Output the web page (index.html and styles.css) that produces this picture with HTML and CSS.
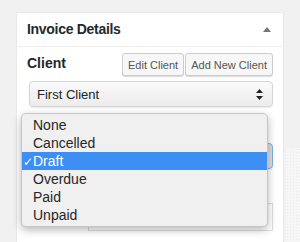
FILE: index.html
```html
<!DOCTYPE html>
<html>
<head>
    <meta charset="utf-8">
    <link rel="stylesheet" href="styles.css">
</head>
<body>
<div class="page">
    <div class="postbox">
        <div class="postbox-header">
            <h2>Invoice Details</h2>
            <span class="toggle"></span>
        </div>

        <div class="inside">
            <div class="client-row">
                <h3>Client</h3>
                <div class="buttons">
                    <button class="btn">Edit Client</button>
                    <button class="btn">Add New Client</button>
                </div>
            </div>

            <div class="select client-select">
                <span>First Client</span>
                <svg class="arrows" width="7" height="11" viewBox="0 0 7 11">
                    <path d="M3.5 0 L7 4 L0 4 Z M0 7 L7 7 L3.5 11 Z" fill="#222"/>
                </svg>
            </div>

            <div class="field status-field">
                <div class="select status-select"></div>
            </div>

            <div class="field">
                <div class="input"></div>
            </div>
        </div>

        <ul class="menu">
            <li>None</li>
            <li>Cancelled</li>
            <li class="selected"><span class="check">✓</span>Draft</li>
            <li>Overdue</li>
            <li>Paid</li>
            <li>Unpaid</li>
        </ul>
    </div>

    <div class="side"></div>
</div>
</body>
</html>
```

FILE: styles.css
```css
* {
    box-sizing: border-box;
}

body {
    margin: 0;
    background-color: #f1f1f1;
    font-family: "Liberation Sans", Arial, sans-serif;
    color: #23282d;
}

.page {
    display: flex;
    gap: 2px;
    padding: 12px 0 0 16px;
    height: 242px;
}

.postbox {
    position: relative;
    width: 268px;
    background-color: #fff;
    border: 1px solid #e8e8e8;
    border-bottom: none;
}

.postbox-header {
    display: flex;
    justify-content: space-between;
    align-items: center;
    padding: 6px 12px 7px 10px;
    border-bottom: 1px solid #eee;
}

.postbox-header h2 {
    margin: 0;
    font-size: 14px;
    line-height: 20px;
    font-weight: bold;
    letter-spacing: -0.3px;
}

.toggle {
    width: 0;
    height: 0;
    border-left: 4px solid transparent;
    border-right: 4px solid transparent;
    border-bottom: 5px solid #72777c;
    margin-top: 1px;
}

.inside {
    padding: 0 10px 0 10px;
}

.client-row {
    display: flex;
    justify-content: space-between;
    align-items: flex-start;
    margin-top: 6px;
}

.client-row h3 {
    margin: 0;
    font-size: 14px;
    line-height: 21px;
    font-weight: bold;
}

.buttons {
    display: flex;
}

.btn {
    height: 23px;
    padding: 0 5px;
    font-family: "Liberation Sans", Arial, sans-serif;
    font-size: 11px;
    color: #555;
    background-color: #f7f7f7;
    border: 1px solid #ccc;
    border-radius: 3px;
    box-shadow: 0 1px 0 #ddd;
}

.btn + .btn {
    margin-left: 1px;
}

.select {
    display: flex;
    justify-content: space-between;
    align-items: center;
    height: 26px;
    border: 1px solid #d6d6d6;
    border-radius: 4px;
    background: linear-gradient(#fafafa, #ececec);
    box-shadow: 0 1px 1px rgba(0, 0, 0, 0.08);
}

.client-select {
    margin: 5px 0 0 2px;
    padding: 0 9px 0 7px;
    font-size: 13px;
    color: #222;
}

.arrows {
    margin-top: 1px;
}

.field {
    display: flex;
    justify-content: flex-end;
}

.status-field {
    margin-top: 36px;
}

.status-select {
    width: 185px;
    border-color: #7fb0e4;
    background: #dcdcdc;
}

.input {
    width: 185px;
    height: 28px;
    margin-top: 34px;
    border: 1px solid #ddd;
    background-color: #fff;
}

.menu {
    position: absolute;
    left: 4px;
    top: 100px;
    width: 247px;
    margin: 0;
    padding: 2px 0;
    list-style: none;
    background-color: #f0f0f0;
    border: 1px solid #c6c6c6;
    border-radius: 5px;
    box-shadow: 0 3px 8px rgba(0, 0, 0, 0.28);
}

.menu li {
    height: 18px;
    line-height: 18px;
    padding-left: 11px;
    font-size: 14px;
    color: #262626;
}

.menu li.selected {
    background-color: #3d8ef5;
    color: #fff;
}

.check {
    display: inline-block;
    width: 10px;
    margin-left: -10px;
    font-family: "DejaVu Sans", sans-serif;
    font-size: 12px;
    font-weight: bold;
}

.side {
    flex: 1;
    margin-top: 136px;
    background-color: #f6f6f6;
    background-image: radial-gradient(#ebebeb 0.6px, transparent 0.8px);
    background-size: 3px 3px;
}
```
